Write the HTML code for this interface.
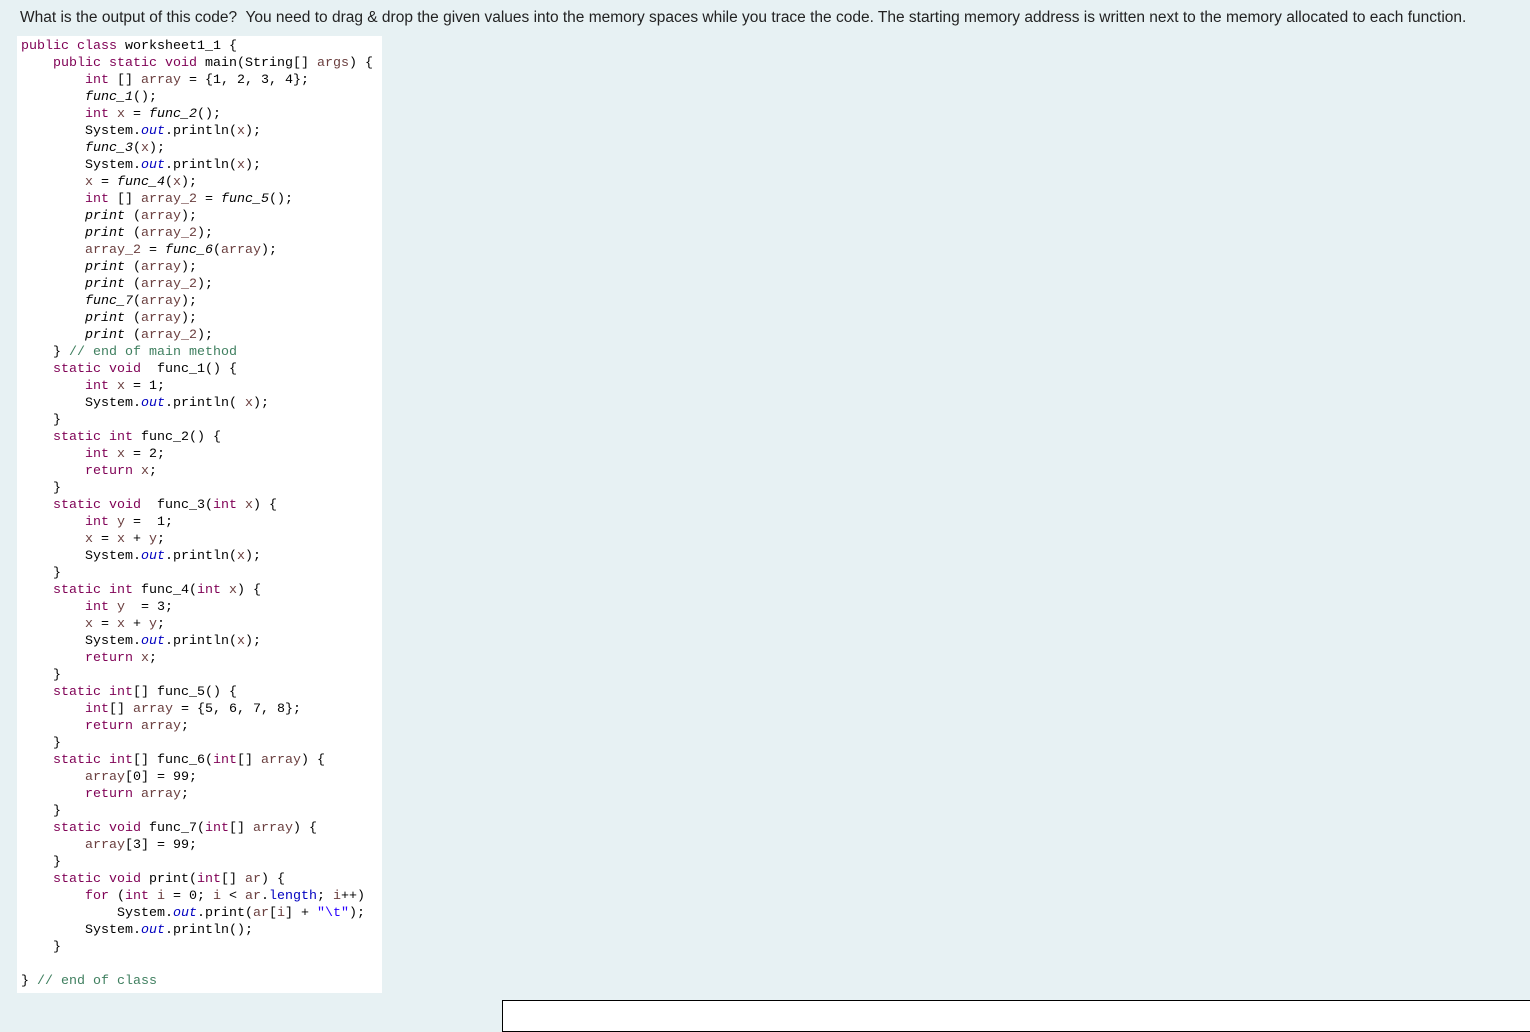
<!DOCTYPE html>
<html><head><meta charset="utf-8"><style>
html,body{margin:0;padding:0;background:#e7f1f3;width:1530px;height:1010px;overflow:hidden;}
.q{position:absolute;left:20px;top:9px;font:15.5px "Liberation Sans",sans-serif;color:#222;white-space:nowrap;}
pre{position:absolute;left:17px;top:36px;width:361px;height:955px;margin:0;padding:2px 0 0 4px;background:#fff;font:13.33px/17px "Liberation Mono",monospace;color:#000;}
.k{color:#7f0055}.v{color:#6a3e3e}.o{color:#0000c0;font-style:italic}.i{font-style:italic}.c{color:#3f7f5f}.s{color:#2a00ff}.f{color:#0000c0}
.box{position:absolute;left:502px;top:1000px;width:1040px;height:30px;border:1px solid #000;background:#fff;}
</style></head><body>
<div class="q">What is the output of this code?&nbsp; You need to drag &amp; drop the given values into the memory spaces while you trace the code. The starting memory address is written next to the memory allocated to each function.</div>
<pre><span class="k">public class</span> worksheet1_1 {
    <span class="k">public static void</span> main(String[] <span class="v">args</span>) {
        <span class="k">int</span> [] <span class="v">array</span> = {1, 2, 3, 4};
        <span class="i">func_1</span>();
        <span class="k">int</span> <span class="v">x</span> = <span class="i">func_2</span>();
        System.<span class="o">out</span>.println(<span class="v">x</span>);
        <span class="i">func_3</span>(<span class="v">x</span>);
        System.<span class="o">out</span>.println(<span class="v">x</span>);
        <span class="v">x</span> = <span class="i">func_4</span>(<span class="v">x</span>);
        <span class="k">int</span> [] <span class="v">array_2</span> = <span class="i">func_5</span>();
        <span class="i">print</span> (<span class="v">array</span>);
        <span class="i">print</span> (<span class="v">array_2</span>);
        <span class="v">array_2</span> = <span class="i">func_6</span>(<span class="v">array</span>);
        <span class="i">print</span> (<span class="v">array</span>);
        <span class="i">print</span> (<span class="v">array_2</span>);
        <span class="i">func_7</span>(<span class="v">array</span>);
        <span class="i">print</span> (<span class="v">array</span>);
        <span class="i">print</span> (<span class="v">array_2</span>);
    } <span class="c">// end of main method</span>
    <span class="k">static void</span>  func_1() {
        <span class="k">int</span> <span class="v">x</span> = 1;
        System.<span class="o">out</span>.println( <span class="v">x</span>);
    }
    <span class="k">static int</span> func_2() {
        <span class="k">int</span> <span class="v">x</span> = 2;
        <span class="k">return</span> <span class="v">x</span>;
    }
    <span class="k">static void</span>  func_3(<span class="k">int</span> <span class="v">x</span>) {
        <span class="k">int</span> <span class="v">y</span> =  1;
        <span class="v">x</span> = <span class="v">x</span> + <span class="v">y</span>;
        System.<span class="o">out</span>.println(<span class="v">x</span>);
    }
    <span class="k">static int</span> func_4(<span class="k">int</span> <span class="v">x</span>) {
        <span class="k">int</span> <span class="v">y</span>  = 3;
        <span class="v">x</span> = <span class="v">x</span> + <span class="v">y</span>;
        System.<span class="o">out</span>.println(<span class="v">x</span>);
        <span class="k">return</span> <span class="v">x</span>;
    }
    <span class="k">static int</span>[] func_5() {
        <span class="k">int</span>[] <span class="v">array</span> = {5, 6, 7, 8};
        <span class="k">return</span> <span class="v">array</span>;
    }
    <span class="k">static int</span>[] func_6(<span class="k">int</span>[] <span class="v">array</span>) {
        <span class="v">array</span>[0] = 99;
        <span class="k">return</span> <span class="v">array</span>;
    }
    <span class="k">static void</span> func_7(<span class="k">int</span>[] <span class="v">array</span>) {
        <span class="v">array</span>[3] = 99;
    }
    <span class="k">static void</span> print(<span class="k">int</span>[] <span class="v">ar</span>) {
        <span class="k">for</span> (<span class="k">int</span> <span class="v">i</span> = 0; <span class="v">i</span> &lt; <span class="v">ar</span>.<span class="f">length</span>; <span class="v">i</span>++)
            System.<span class="o">out</span>.print(<span class="v">ar</span>[<span class="v">i</span>] + <span class="s">"\t"</span>);
        System.<span class="o">out</span>.println();
    }

} <span class="c">// end of class</span></pre>
<div class="box"></div>
</body></html>
